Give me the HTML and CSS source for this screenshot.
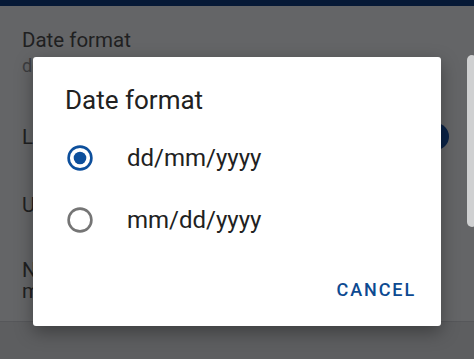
FILE: index.html
```html
<!DOCTYPE html>
<html lang="en">
<head>
  <meta charset="UTF-8" />
  <meta name="viewport" content="width=device-width, initial-scale=1.0"/>
  <title>Settings</title>
  <link rel="stylesheet" href="styles.css">
</head>
<body>
  <div class="statusbar"></div>

  <div class="settings">
    <div class="row row-first">
      <div class="row-title">Date format</div>
      <div class="row-sub">dd/mm/yyyy</div>
    </div>
    <div class="row row-switch">
      <div class="row-title">Location</div>
      <span class="switch"><span class="thumb"></span></span>
    </div>
    <div class="row">
      <div class="row-title">Units</div>
    </div>
    <div class="row row-last">
      <div class="row-title">Notifications<br>messages</div>
    </div>
  </div>

  <div class="bottombar"></div>
  <div class="scrollstrip"></div>

  <div class="dialog">
    <h2 class="dialog-title">Date format</h2>
    <ul class="options">
      <li class="option">
        <svg class="radio" width="26" height="26" viewBox="0 0 26 26">
          <circle cx="13" cy="13" r="11.4" fill="none" stroke="#0d4f9c" stroke-width="2.6"/>
          <circle cx="13" cy="13" r="6.3" fill="#0d4f9c"/>
        </svg>
        <span>dd/mm/yyyy</span>
      </li>
      <li class="option">
        <svg class="radio" width="26" height="26" viewBox="0 0 26 26">
          <circle cx="13" cy="13" r="11.4" fill="none" stroke="#757575" stroke-width="2.6"/>
        </svg>
        <span>mm/dd/yyyy</span>
      </li>
    </ul>
    <div class="actions">
      <button class="btn-text">CANCEL</button>
    </div>
  </div>
</body>
</html>
```

FILE: styles.css
```css
body {
  margin: 0;
  width: 474px;
  height: 359px;
  background: #646567;
  font-family: Roboto, "Noto Sans", sans-serif;
  position: relative;
  overflow: hidden;
}

.statusbar {
  height: 6px;
  background: #061936;
}

.settings {
  display: flex;
  flex-direction: column;
}

.row {
  display: flex;
  align-items: center;
  justify-content: space-between;
  padding: 22px 25px 21px 22px;
}

.row-first {
  flex-direction: column;
  align-items: flex-start;
  padding: 22px 25px 21px 22px;
}

.row-title {
  font-size: 20.5px;
  line-height: 24px;
  color: #1f2021;
}

.row-last .row-title {
  line-height: 21px;
}

.row-sub {
  font-size: 18px;
  line-height: 28px;
  color: #3c3d3f;
}

.switch {
  display: flex;
  align-items: center;
}

.thumb {
  width: 27px;
  height: 27px;
  border-radius: 50%;
  background: #0a2347;
}

.bottombar {
  position: absolute;
  left: 0;
  right: 0;
  bottom: 0;
  height: 37px;
  background: #5d5e60;
  border-top: 1px solid #56575a;
}

.scrollstrip {
  position: absolute;
  top: 55px;
  left: 467px;
  width: 10px;
  height: 172px;
  border-radius: 5px;
  background: #cfd0d1;
}

.dialog {
  position: absolute;
  left: 33px;
  top: 57px;
  width: 408px;
  height: 269px;
  box-sizing: border-box;
  background: #ffffff;
  border-radius: 3px;
  box-shadow: 0 6px 18px rgba(0, 0, 0, 0.35);
  padding: 27px 25px 18px 32px;
  display: flex;
  flex-direction: column;
}

.dialog-title {
  margin: 0;
  font-size: 26px;
  line-height: 32px;
  font-weight: 400;
  color: #212121;
}

.options {
  list-style: none;
  margin: 11px 0 0;
  padding: 0;
}

.option {
  display: flex;
  align-items: center;
  height: 62px;
  font-size: 24px;
  color: #212121;
}

.radio {
  margin-left: 2px;
  margin-right: 34px;
  flex-shrink: 0;
}

.actions {
  display: flex;
  justify-content: flex-end;
  margin-top: 21px;
}

.btn-text {
  background: none;
  border: none;
  padding: 0;
  margin-right: 0;
  font-family: Roboto, sans-serif;
  font-size: 18px;
  line-height: 36px;
  font-weight: 500;
  letter-spacing: 1.9px;
  color: #0d4a91;
  cursor: pointer;
}
```
